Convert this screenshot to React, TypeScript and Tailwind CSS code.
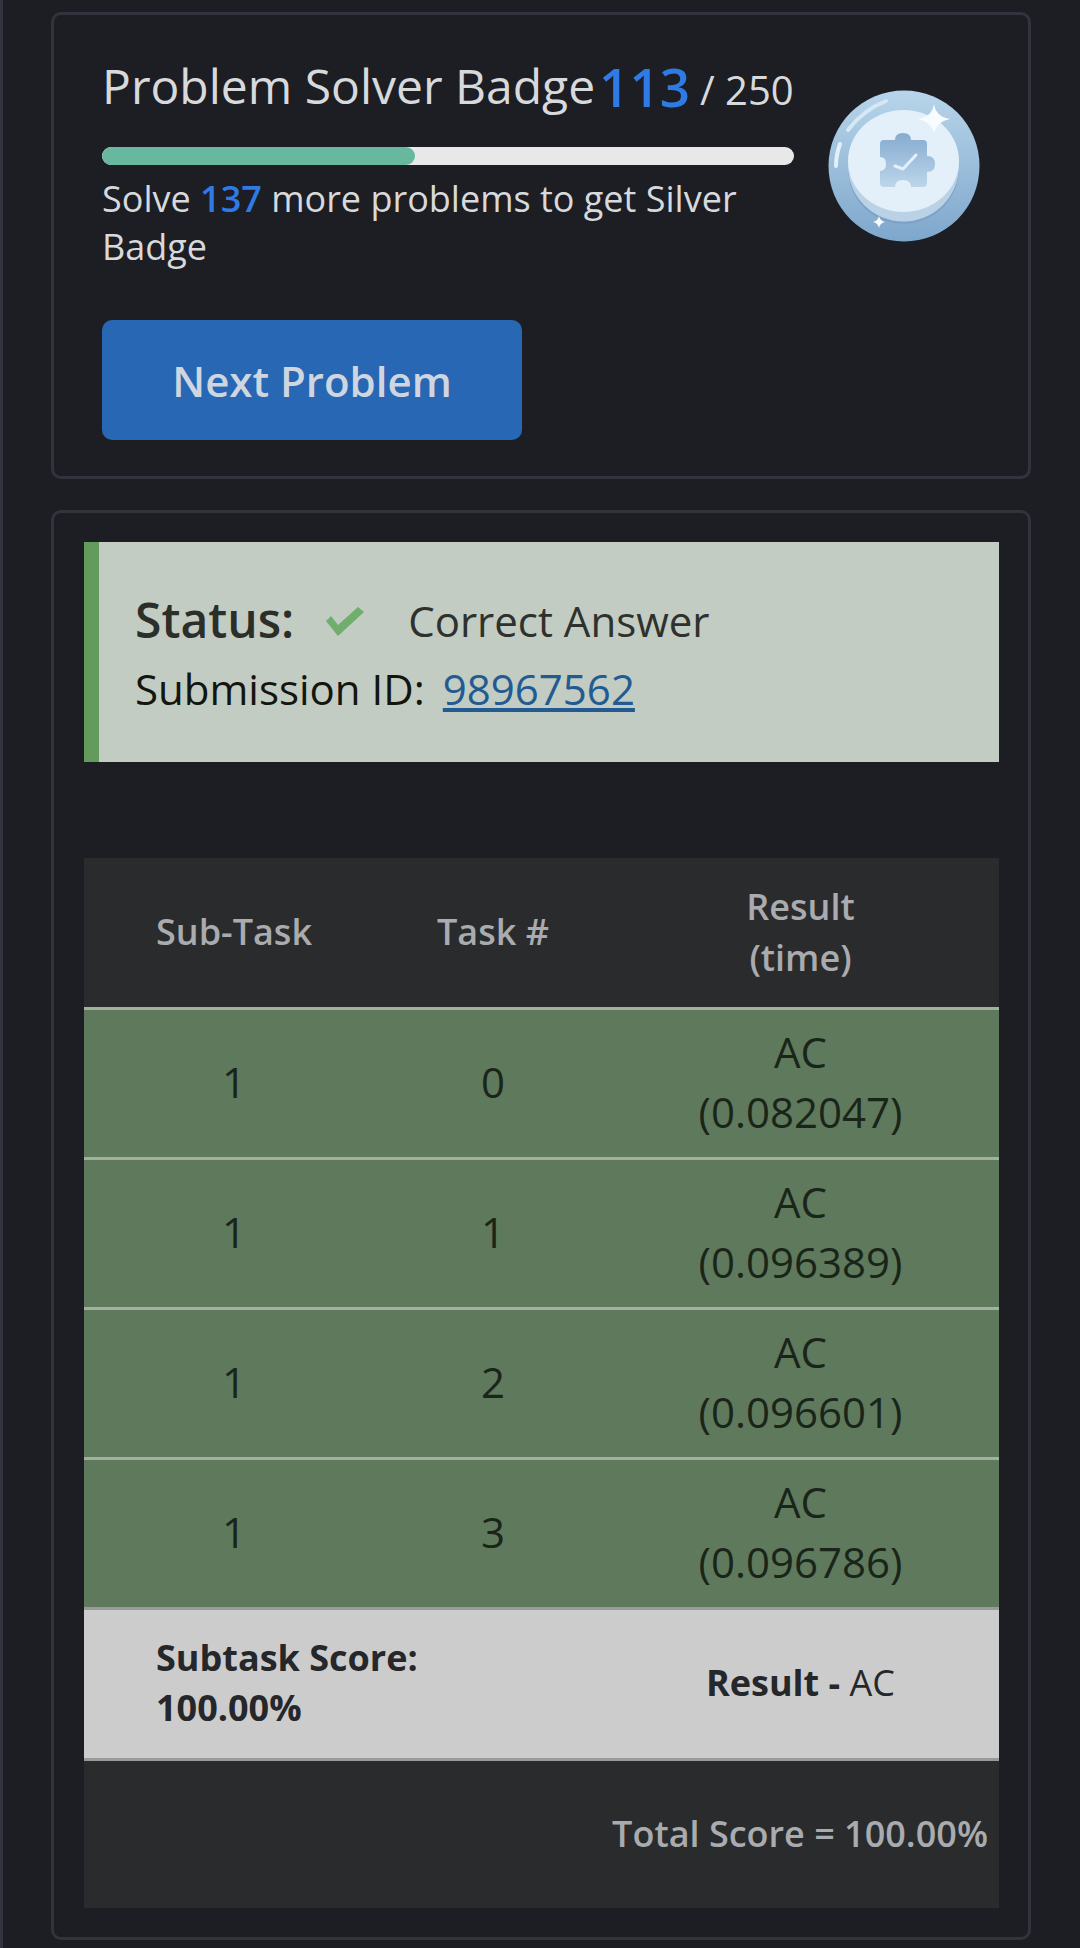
const ROWS = [
  { subtask: 1, task: 0, result: 'AC', time: '(0.082047)' },
  { subtask: 1, task: 1, result: 'AC', time: '(0.096389)' },
  { subtask: 1, task: 2, result: 'AC', time: '(0.096601)' },
  { subtask: 1, task: 3, result: 'AC', time: '(0.096786)' },
]

function BadgeIcon() {
  return (
    <svg width="152" height="152" viewBox="0 0 152 152" className="shrink-0">
      <defs>
        <linearGradient id="rim" x1="0" y1="0" x2="0" y2="1">
          <stop offset="0" stopColor="#b8d5ea" />
          <stop offset="1" stopColor="#7ea7cc" />
        </linearGradient>
        <linearGradient id="puzzle" x1="0" y1="0" x2="0" y2="1">
          <stop offset="0" stopColor="#86abd0" />
          <stop offset="1" stopColor="#bcd6ea" />
        </linearGradient>
      </defs>
      <circle cx="76" cy="76" r="75.5" fill="url(#rim)" />
      <circle cx="75.5" cy="78.5" r="55.5" fill="#7fa3c6" />
      <circle cx="75.5" cy="76" r="55.5" fill="#b9d2e6" />
      <ellipse cx="75.5" cy="71" rx="55.5" ry="51" fill="#e4f0f9" />
      <path d="M20 40 Q35 20 58 11" fill="none" stroke="#d6e8f5" strokeWidth="4" strokeLinecap="round" />
      <path d="M12 54 Q8 65 8 76" fill="none" stroke="#e3f0f9" strokeWidth="4" strokeLinecap="round" />
      <path d="M106 14 Q108 27 122 29 Q108 32 106 44 Q104 32 90 29 Q104 27 106 14Z" fill="#f8fcff" />
      <path d="M51 126 Q52 131 57 132 Q52 133 51 138 Q50 133 45 132 Q50 131 51 126Z" fill="#f8fcff" />
      <path d="M56 50 H67 Q67 43 75 43 Q83 43 83 50 H95 Q99 50 99 54 V66 Q107 66 107 74 Q107 82 99 82 V93 Q99 97 95 97 H83 Q83 90 75 90 Q67 90 67 97 H56 Q52 97 52 93 V81 Q58 81 58 74 Q58 67 52 67 V54 Q52 50 56 50Z" fill="url(#puzzle)" />
      <path d="M67 76 L75 79 L88 65" fill="none" stroke="#e4f0f9" strokeWidth="3" strokeLinecap="round" strokeLinejoin="round" />
    </svg>
  )
}

export default function App() {
  return (
    <div className="h-[1948px] overflow-hidden bg-[#1c1e23] font-['Open_Sans',sans-serif] border-l-[3px] border-[#31343e] pl-[48px] pr-[48px] pt-[12px]">
      <div className="w-[980px] h-[467px] rounded-[10px] border-[3px] border-[#31343e] pl-[48px] pr-[48px] pt-[37px]">
        <div className="flex items-start justify-between">
          <div className="w-[692px]">
            <div className="flex items-end h-[72px] whitespace-nowrap text-[#d8d9dc]">
              <span className="text-[48px] leading-[77px]">Problem Solver Badge</span>
              <span className="ml-[4px] text-[53px] leading-[75px] font-semibold text-[#2f7ae5]">113</span>
              <span className="ml-[10px] text-[40px] leading-[68px]">/ 250</span>
            </div>
            <div className="mt-[23px] h-[18px] rounded-full bg-[#e8e8e8] overflow-hidden">
              <div className="h-full w-[313px] rounded-full bg-[#68b8a0]" />
            </div>
            <p className="mt-[10px] text-[36px] leading-[48px] text-[#d8d9dc]">
              Solve <span className="font-semibold text-[#2f7ae5]">137</span> more problems to get Silver Badge
            </p>
          </div>
          <div className="mt-[38px]">
            <BadgeIcon />
          </div>
        </div>
        <button className="mt-[49px] w-[420px] h-[120px] rounded-[10px] bg-[#2767b4] text-[42px] font-semibold text-[#cfd6e0]">
          Next Problem
        </button>
      </div>

      <div className="mt-[31px] w-[980px] h-[1430px] rounded-[10px] border-[3px] border-[#31343e] pl-[30px] pr-[30px] pt-[29px]">
        <div className="w-[915px] h-[220px] border-l-[15px] border-[#629b5c] bg-[#c2ccc2] pl-[36px] pt-[46px]">
          <div className="flex items-center h-[64px]">
            <span className="text-[48px] font-semibold text-[#2c2e2a]">Status:</span>
            <svg width="38" height="29" viewBox="0 0 38 29" className="ml-[32px] mt-[2px]">
              <path d="M0 14 L12 29 L38 5 L32 0 L12 18 L5 9Z" fill="#6fae6c" />
            </svg>
            <span className="ml-[44px] text-[42px] text-[#2f312d]">Correct Answer</span>
          </div>
          <div className="mt-[7px] text-[42px] leading-[60px] text-[#14150f]">
            Submission ID:
            <a className="ml-[18px] underline text-[#235a92]">98967562</a>
          </div>
        </div>

        <table className="mt-[96px] w-[915px] border-collapse table-fixed text-center">
          <thead>
            <tr className="h-[150px] bg-[#2a2b2d] text-[36px] leading-[51px] text-[#a9abaf]">
              <th className="w-[300px] font-semibold pb-[2px]">Sub-Task</th>
              <th className="w-[218px] font-semibold pb-[2px]">Task #</th>
              <th className="font-semibold">Result<br />(time)</th>
            </tr>
          </thead>
          <tbody>
            {ROWS.map(r => (
              <tr key={r.task} className="h-[150px] border-t-[3px] border-[#a3b09f] bg-[#5f795c] text-[42px] leading-[60px] text-[#1a251a]">
                <td className="pb-[3px]">{r.subtask}</td>
                <td className="pb-[3px]">{r.task}</td>
                <td className="pb-[2px]">{r.result}<br />{r.time}</td>
              </tr>
            ))}
            <tr className="h-[151px] border-t-[3px] border-b-[3px] border-[#9a9a9a] bg-[#cccccc] text-[36px] leading-[50px] text-[#25272a]">
              <td colSpan={2} className="text-left pl-[72px] pb-[2px] font-bold">Subtask Score:<br />100.00%</td>
              <td className="pb-[2px]"><b>Result - </b>AC</td>
            </tr>
            <tr className="h-[149px] bg-[#2a2b2d] text-[36px] font-semibold text-[#a9abaf]">
              <td colSpan={3} className="text-right pr-[11px]">Total Score = 100.00%</td>
            </tr>
          </tbody>
        </table>
      </div>
    </div>
  )
}
